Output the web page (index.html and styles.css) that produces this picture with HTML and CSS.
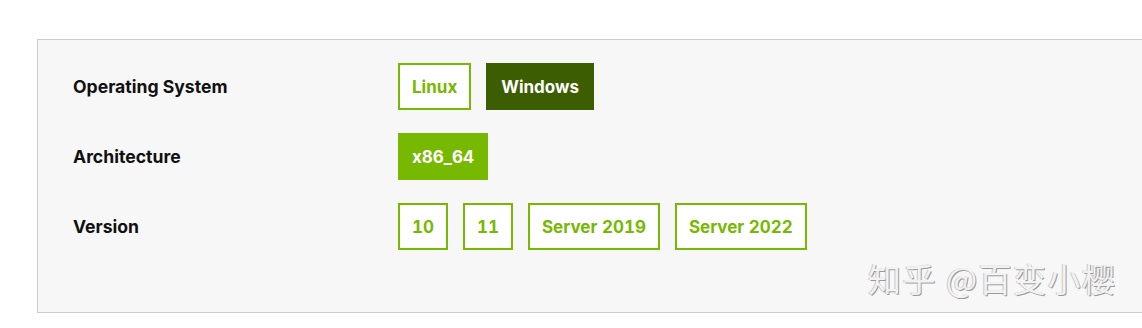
FILE: index.html
```html
<!DOCTYPE html>
<html>
<head>
<meta charset="utf-8">
<link rel="stylesheet" href="styles.css">
</head>
<body>
<div class="panel">
  <div class="row">
    <div class="label">Operating System</div>
    <div class="opts">
      <span class="btn">Linux</span>
      <span class="btn dark">Windows</span>
    </div>
  </div>
  <div class="row">
    <div class="label">Architecture</div>
    <div class="opts">
      <span class="btn active">x86_64</span>
    </div>
  </div>
  <div class="row">
    <div class="label">Version</div>
    <div class="opts">
      <span class="btn">10</span>
      <span class="btn">11</span>
      <span class="btn">Server 2019</span>
      <span class="btn">Server 2022</span>
    </div>
  </div>
  <div class="watermark">知乎 @百变小樱</div>
</div>
</body>
</html>
```
FILE: styles.css
```css
html, body {
  margin: 0;
  padding: 0;
  background: #ffffff;
  overflow: hidden;
}
body {
  width: 1142px;
  height: 328px;
  font-family: Inter, "Liberation Sans", sans-serif;
}
.panel {
  position: relative;
  margin: 39px 0 0 37px;
  height: 226px;
  background: #f7f7f7;
  border: 1px solid #cccccc;
  border-right: none;
  padding: 23px 0 23px 35px;
  display: flex;
  flex-direction: column;
  gap: 23px;
}
.row {
  display: flex;
  align-items: center;
  height: 47px;
}
.label {
  width: 325px;
  font-size: 17.6px;
  font-weight: 700;
  color: #111111;
}
.opts {
  display: flex;
  gap: 15px;
}
.btn {
  box-sizing: border-box;
  height: 47px;
  display: flex;
  align-items: center;
  padding: 0 12px;
  border: 2px solid #76b900;
  background: #ffffff;
  color: #76b900;
  font-size: 17px;
  font-weight: 700;
  font-variant-numeric: tabular-nums;
}
.btn.dark {
  background: #3d5e00;
  border-color: #3d5e00;
  color: #ffffff;
  padding: 0 13px;
}
.btn.active {
  background: #76b900;
  color: #ffffff;
}
.watermark {
  position: absolute;
  left: 830px;
  top: 222px;
  font-family: "Noto Sans CJK SC", sans-serif;
  font-size: 33px;
  line-height: 1;
  color: #f2f2f2;
  text-shadow: 1px 1px 0 #9a9a9a, -1px 0 0 #c8c8c8;
  letter-spacing: 1.5px;
  white-space: nowrap;
}
```
